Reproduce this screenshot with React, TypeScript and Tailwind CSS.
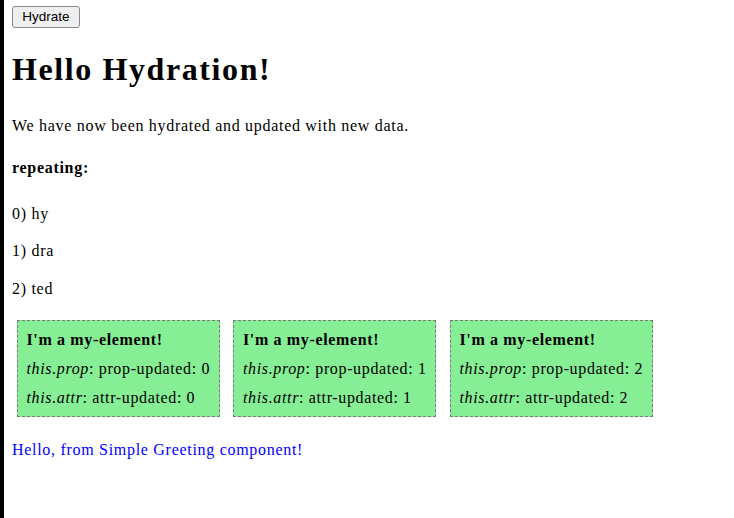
const items = ["hy", "dra", "ted"];

function MyElement({ n }: { n: number }) {
  return (
    <div className="flex w-[203px] shrink-0 flex-col gap-[11px] whitespace-nowrap border border-dashed border-[#7a7a7a] bg-[#86ee94] px-[9px] pb-[9px] pt-[10px] leading-[18px] tracking-[0.04em]">
      <p className="font-bold">I'm a my-element!</p>
      <p>
        <i>this.prop</i>: prop-updated: {n}
      </p>
      <p>
        <i>this.attr</i>: attr-updated: {n}
      </p>
    </div>
  );
}

export default function App() {
  return (
    <div className="min-h-screen border-l-4 border-black bg-white pl-2 pt-[6px] font-['Liberation_Serif',serif] text-base tracking-[0.044em] text-black">
      <button
        type="button"
        className="flex h-[22px] w-[68px] items-center justify-center rounded-[3px] border border-[#8a8a8a] bg-[#efefef] font-['Liberation_Sans',sans-serif] text-[13.5px] tracking-normal"
      >
        Hydrate
      </button>
      <h1 className="mt-[23.2px] text-[32px] font-bold leading-[37px] tracking-[0.05em]">Hello Hydration!</h1>
      <p className="mt-[29.1px] leading-[18px]">We have now been hydrated and updated with new data.</p>
      <p className="mt-[24px] font-bold leading-[18px]">repeating:</p>
      <div className="mt-[27.3px] flex flex-col gap-[19.5px] leading-[18px]">
        {items.map((item, i) => (
          <p key={item}>
            {i}) {item}
          </p>
        ))}
      </div>
      <div className="ml-[4.5px] mt-[22px] flex gap-[13.5px]">
        {[0, 1, 2].map((n) => (
          <MyElement key={n} n={n} />
        ))}
      </div>
      <p className="mt-[24.6px] leading-[18px] text-[#0000ff]">Hello, from Simple Greeting component!</p>
    </div>
  );
}
